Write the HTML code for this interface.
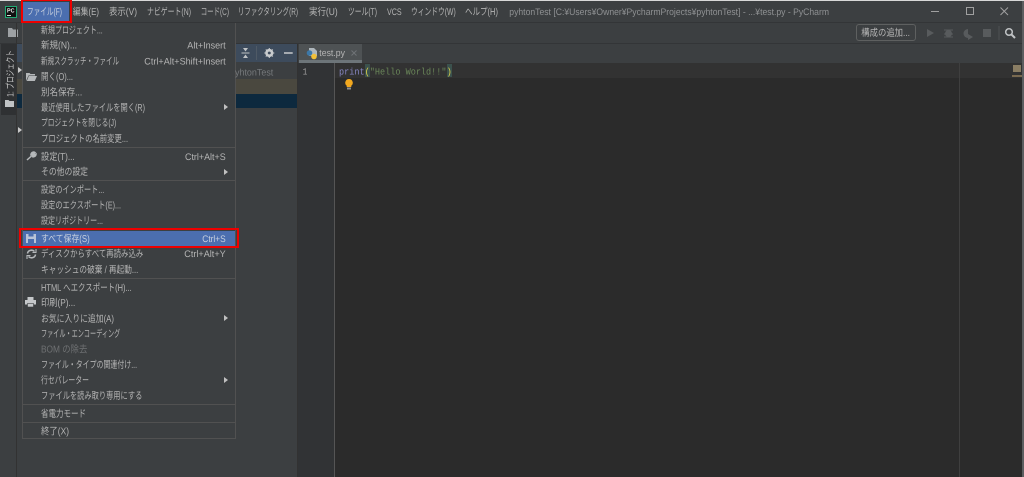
<!DOCTYPE html>
<html lang="ja"><head><meta charset="utf-8"><title>PyCharm</title>
<style>
html,body{margin:0;padding:0;background:#3c3f41}
#r{position:relative;width:1024px;height:477px;overflow:hidden;background:#3c3f41}
#r div,#r svg{position:absolute}
#tx{left:0;top:0;filter:blur(.35px)}
#tx text{font-family:"Liberation Sans","Noto Sans CJK JP",sans-serif;font-size:10px;fill:#b4b4b4;white-space:pre;text-rendering:geometricPrecision}
#tx .e{font-size:9.5px}
#tx .m{font-family:"Liberation Mono",monospace;font-size:9.5px}
.d{left:23px;width:212px;height:1px;background:#515151}
.ar{left:224px;width:0;height:0;border-left:4px solid #c0c0c0;border-top:3px solid transparent;border-bottom:3px solid transparent}
</style></head><body>
<div id="r">
<div style="left:0;top:0;width:1024px;height:1px;background:#d8d8d8"></div>
<div style="left:0;top:22px;width:1024px;height:1px;background:#333537"></div>
<div style="left:0;top:43px;width:1024px;height:1px;background:#333537"></div>
<div style="left:1022px;top:1px;width:2px;height:476px;background:#5c5e60"></div>

<!-- logo -->
<div style="left:5px;top:6px;width:12px;height:12px;background:#21a873"></div>
<div style="left:6px;top:7px;width:10px;height:10px;background:#111"></div>
<div style="left:7px;top:14.500px;width:4px;height:1px;background:#d8d8d8"></div>

<!-- menu bar highlight -->
<div style="left:23px;top:2px;width:46px;height:21px;background:#4b6eaf"></div>

<!-- window controls -->
<svg style="left:925px;top:3px" width="95" height="17" fill="none" stroke="#a0a0a0" stroke-width="1">
<path d="M6 8.500H14"/><rect x="41.500" y="4.500" width="7" height="7"/><path d="M75.500 4.500L83 12M83 4.500L75.500 12"/></svg>

<!-- toolbar -->
<svg style="left:7px;top:27px" width="12" height="11"><path d="M1 1h4l1 1.500h5V10H1z" fill="#9da1a4"/></svg>
<div style="left:856px;top:24px;width:58px;height:15px;border:1px solid #5e6060;border-radius:3px"></div>
<svg style="left:924px;top:25px" width="98" height="17">
<path d="M3 4L10 8L3 12z" fill="#585b5d"/>
<circle cx="24.500" cy="8.500" r="3.500" fill="#585b5d"/><path d="M20 5L29 5M20 9H29M20 12H29" stroke="#585b5d"/>
<path d="M44 4a4.500 4.500 0 1 0 0 9z" fill="#585b5d"/><path d="M44 9l5 3-5 3z" fill="#585b5d"/>
<rect x="59" y="4" width="8" height="8" fill="#585b5d"/>
<path d="M75 1V15" stroke="#4e5254"/>
<circle cx="85" cy="7" r="3.300" fill="none" stroke="#c0c3c5" stroke-width="1.500"/><path d="M87.500 9.500L91 13" stroke="#c0c3c5" stroke-width="2"/>
</svg>

<!-- left stripe -->
<div style="left:1px;top:44px;width:15px;height:71px;background:#2f3133"></div>
<svg style="left:5px;top:100px" width="9" height="7"><path d="M0 0h3.500l1 1H9V7H0z" fill="#c0c3c5"/></svg>
<div style="left:16px;top:23px;width:1px;height:454px;background:#323232"></div>

<!-- project panel -->
<div style="left:17px;top:44px;width:281px;height:18px;background:#3d4b5c"></div>
<div style="left:17px;top:79px;width:281px;height:15px;background:#4a483f"></div>
<div style="left:17px;top:94px;width:281px;height:14px;background:#0d293e"></div>
<svg style="left:18px;top:66px" width="5" height="70"><path d="M0 1L4 4L0 7z" fill="#c8c8c8"/><path d="M0 61L4 64L0 67z" fill="#c8c8c8"/></svg>
<svg style="left:236px;top:45px" width="60" height="16">
<path d="M5.500 8H13.500" stroke="#c0c3c5"/><path d="M7 3H12L9.500 6.500zM7 13H12L9.500 9.500z" fill="#c0c3c5"/>
<path d="M20.500 1V15" stroke="#4f5a66"/>
<circle cx="33.300" cy="8" r="2.900" fill="none" stroke="#c8cbcd" stroke-width="2.400"/>
<path d="M33.300 3V13M28.300 8H38.300M29.800 4.500L36.800 11.500M36.800 4.500L29.800 11.500" stroke="#c8cbcd" stroke-width="1.100"/>
<circle cx="33.300" cy="8" r="1.400" fill="#3d4b5c"/>
<path d="M48 8H56.700" stroke="#c8cbcd" stroke-width="1.500"/></svg>
<div style="left:297px;top:44px;width:1px;height:433px;background:#323232"></div>

<!-- tabs -->
<div style="left:298px;top:44px;width:724px;height:19px;background:#3c3f41"></div>
<div style="left:299px;top:44px;width:63px;height:16px;background:#4e5254"></div>
<div style="left:299px;top:60px;width:63px;height:3px;background:#6d7579"></div>
<svg style="left:306px;top:47px" width="12" height="13"><path d="M3 1h5l3 3v5H3z" fill="#aeb6bc"/><circle cx="3.500" cy="6" r="2.800" fill="#3c78a8"/><circle cx="8" cy="9.500" r="2.800" fill="#f2c037"/></svg>
<svg style="left:351px;top:50px" width="6" height="6"><path d="M0.500 0.500L5.500 5.500M5.500 0.500L0.500 5.500" stroke="#6f7376"/></svg>

<!-- gutter + editor -->
<div style="left:298px;top:63px;width:36px;height:414px;background:#313335"></div>
<div style="left:334px;top:63px;width:1px;height:414px;background:#555"></div>
<div style="left:335px;top:63px;width:687px;height:414px;background:#2b2b2b"></div>
<div style="left:335px;top:63px;width:687px;height:15px;background:#323232"></div>
<div style="left:959px;top:63px;width:1px;height:414px;background:#3f3f3f"></div>
<div style="left:1013px;top:65px;width:8px;height:7px;background:#8a7d63"></div>
<div style="left:1012px;top:75px;width:10px;height:2px;background:#7a6a50"></div>
<div style="left:365px;top:64px;width:5px;height:13px;background:#3b514d"></div>
<div style="left:447px;top:64px;width:5px;height:13px;background:#3b514d"></div>
<svg style="left:345px;top:79px" width="8" height="11"><path d="M4 0a3.800 3.800 0 0 1 2.300 6.800V8H1.700V6.800A3.800 3.800 0 0 1 4 0z" fill="#f2a81f"/><rect x="2" y="8.500" width="4" height="2" fill="#8f8f8f"/></svg>

<!-- menu -->
<div style="left:22px;top:23px;width:212px;height:415px;background:#3c3f41;border:1px solid #515151;border-top:0"></div>
<div class="d" style="top:147px"></div><div class="d" style="top:180px"></div><div class="d" style="top:229px"></div><div class="d" style="top:278px"></div><div class="d" style="top:404px"></div><div class="d" style="top:422px"></div>
<div style="left:23px;top:231px;width:212px;height:16px;background:#4b6eaf"></div>
<div class="ar" style="top:104px"></div><div class="ar" style="top:169px"></div><div class="ar" style="top:315px"></div><div class="ar" style="top:377px"></div>

<svg style="left:26px;top:73px" width="11" height="8"><path d="M0 0h3.500l1 1H9v1.500H2.500L0 8zM2.800 3H11L8.800 8H.8z" fill="#b5b8ba"/></svg>
<svg style="left:26px;top:151px" width="11" height="10"><path d="M1 9L5.500 5M5 4.500a2.700 2.700 0 0 1 4-3L7.500 3 8.300 4 10 3a2.700 2.700 0 0 1-4 2.500" fill="#b5b8ba" stroke="#b5b8ba" stroke-width="1.500"/></svg>
<svg style="left:26px;top:234px" width="10" height="9"><rect width="10" height="9" fill="#b9c3d6"/><rect x="2.500" y="0" width="5" height="2.500" fill="#4b6eaf"/><rect x="2" y="5" width="6" height="4" fill="#4b6eaf"/></svg>
<svg style="left:26px;top:249px" width="11" height="10" fill="none" stroke="#b5b8ba" stroke-width="1.500"><path d="M1.500 4.500a4 3.700 0 0 1 7-2M9.500 5.500a4 3.700 0 0 1-7 2"/><path d="M6.500 3.500H10V0M4.500 6.500H1V10" stroke-width="1.100"/></svg>
<svg style="left:25px;top:297px" width="11" height="10"><rect x="2.500" y="0" width="6" height="3" fill="#c4c7c9"/><rect x="0" y="3" width="11" height="4.500" fill="#c4c7c9"/><rect x="2.500" y="6.500" width="6" height="3.500" fill="#c4c7c9" stroke="#3c3f41" stroke-width=".6"/></svg>

<!-- all text -->
<svg id="tx" width="1024" height="477">
<g>
<text x="7" y="12.500" textLength="7.500" lengthAdjust="spacingAndGlyphs" style="font-size:6px;font-weight:bold;fill:#f0f0f0">PC</text>
<text x="27" y="15" textLength="35" lengthAdjust="spacingAndGlyphs" style="fill:#c8d0de">ファイル(F)</text>
<text x="72.700" y="15" textLength="26.300" lengthAdjust="spacingAndGlyphs">編集(E)</text>
<text x="109" y="15" textLength="28" lengthAdjust="spacingAndGlyphs">表示(V)</text>
<text x="147" y="15" textLength="44" lengthAdjust="spacingAndGlyphs">ナビゲート(N)</text>
<text x="200.700" y="15" textLength="28.300" lengthAdjust="spacingAndGlyphs">コード(C)</text>
<text x="238" y="15" textLength="60" lengthAdjust="spacingAndGlyphs">リファクタリング(R)</text>
<text x="309" y="15" textLength="28.700" lengthAdjust="spacingAndGlyphs">実行(U)</text>
<text x="348" y="15" textLength="29" lengthAdjust="spacingAndGlyphs">ツール(T)</text>
<text class="e" x="387" y="15" textLength="14.700" lengthAdjust="spacingAndGlyphs">VCS</text>
<text x="411" y="15" textLength="44.700" lengthAdjust="spacingAndGlyphs">ウィンドウ(W)</text>
<text x="465" y="15" textLength="33" lengthAdjust="spacingAndGlyphs">ヘルプ(H)</text>
<text class="e" x="509.300" y="15" textLength="319.700" lengthAdjust="spacingAndGlyphs" style="fill:#8f9193">pyhtonTest [C:¥Users¥Owner¥PycharmProjects¥pyhtonTest] - ...¥test.py - PyCharm</text>

<text x="861.300" y="36" textLength="48.700" lengthAdjust="spacingAndGlyphs">構成の追加...</text>
<text x="0" y="0" transform="translate(13.500 96.700) rotate(-90)" textLength="46.500" lengthAdjust="spacingAndGlyphs" style="font-size:9.500px;fill:#c4c4c4">1: プロジェクト</text>
<text class="e" x="235" y="75.500" textLength="38.300" lengthAdjust="spacingAndGlyphs" style="fill:#75787b">yhtonTest</text>
<text class="e" x="319.300" y="56" textLength="25.700" lengthAdjust="spacingAndGlyphs">test.py</text>

<text class="m" x="302.700" y="74.500" textLength="4.500" lengthAdjust="spacingAndGlyphs" style="fill:#a4a3a3">1</text>
<text class="m" x="339" y="74.500" textLength="25.600" lengthAdjust="spacingAndGlyphs" style="fill:#8888c6">print</text>
<text class="m" x="364.700" y="74.500" textLength="5" lengthAdjust="spacingAndGlyphs" style="fill:#e6d94a">(</text>
<text class="m" x="369.800" y="74.500" textLength="76.700" lengthAdjust="spacingAndGlyphs" style="fill:#6a8759">"Hello World!!"</text>
<text class="m" x="446.700" y="74.500" textLength="5" lengthAdjust="spacingAndGlyphs" style="fill:#e6d94a">)</text>

<text x="41" y="33.500" textLength="61.700" lengthAdjust="spacingAndGlyphs">新規プロジェクト...</text>
<text x="41" y="48.500" textLength="36" lengthAdjust="spacingAndGlyphs">新規(N)...</text>
<text class="e" x="187.300" y="48.500" textLength="38.400" lengthAdjust="spacingAndGlyphs">Alt+Insert</text>
<text x="41" y="64.500" textLength="78" lengthAdjust="spacingAndGlyphs">新規スクラッチ・ファイル</text>
<text class="e" x="144.300" y="64.500" textLength="81.400" lengthAdjust="spacingAndGlyphs">Ctrl+Alt+Shift+Insert</text>
<text x="41" y="80.200" textLength="32" lengthAdjust="spacingAndGlyphs">開く(O)...</text>
<text x="41" y="95.500" textLength="41.300" lengthAdjust="spacingAndGlyphs">別名保存...</text>
<text x="41" y="110.800" textLength="104" lengthAdjust="spacingAndGlyphs">最近使用したファイルを開く(R)</text>
<text x="41" y="126.200" textLength="75.300" lengthAdjust="spacingAndGlyphs">プロジェクトを閉じる(J)</text>
<text x="41" y="141.800" textLength="87" lengthAdjust="spacingAndGlyphs">プロジェクトの名前変更...</text>

<text x="41" y="160.200" textLength="33.700" lengthAdjust="spacingAndGlyphs">設定(T)...</text>
<text class="e" x="185" y="160.200" textLength="40.700" lengthAdjust="spacingAndGlyphs">Ctrl+Alt+S</text>
<text x="41" y="175.200" textLength="47" lengthAdjust="spacingAndGlyphs">その他の設定</text>

<text x="41" y="192.800" textLength="63.300" lengthAdjust="spacingAndGlyphs">設定のインポート...</text>
<text x="41" y="208.500" textLength="80" lengthAdjust="spacingAndGlyphs">設定のエクスポート(E)...</text>
<text x="41" y="223.800" textLength="62" lengthAdjust="spacingAndGlyphs">設定リポジトリー...</text>

<text x="41" y="241.800" textLength="48.700" lengthAdjust="spacingAndGlyphs" style="fill:#c8d0de">すべて保存(S)</text>
<text class="e" x="202.300" y="241.800" textLength="23.400" lengthAdjust="spacingAndGlyphs" style="fill:#c8d0de">Ctrl+S</text>
<text x="41" y="257.200" textLength="102.300" lengthAdjust="spacingAndGlyphs">ディスクからすべて再読み込み</text>
<text class="e" x="184.300" y="257.200" textLength="41.400" lengthAdjust="spacingAndGlyphs">Ctrl+Alt+Y</text>
<text x="41" y="272.800" textLength="97.300" lengthAdjust="spacingAndGlyphs">キャッシュの破棄 / 再起動...</text>

<text x="41" y="290.800" textLength="90.700" lengthAdjust="spacingAndGlyphs">HTML へエクスポート(H)...</text>
<text x="41" y="306.200" textLength="34.300" lengthAdjust="spacingAndGlyphs">印刷(P)...</text>
<text x="41" y="321.800" textLength="73" lengthAdjust="spacingAndGlyphs">お気に入りに追加(A)</text>
<text x="41" y="336.800" textLength="79.300" lengthAdjust="spacingAndGlyphs">ファイル・エンコーディング</text>
<text x="41" y="352.500" textLength="46.300" lengthAdjust="spacingAndGlyphs" style="fill:#6f7173">BOM の除去</text>
<text x="41" y="368.200" textLength="96" lengthAdjust="spacingAndGlyphs">ファイル・タイプの関連付け...</text>
<text x="41" y="383.500" textLength="48" lengthAdjust="spacingAndGlyphs">行セパレーター</text>
<text x="41" y="398.800" textLength="101.300" lengthAdjust="spacingAndGlyphs">ファイルを読み取り専用にする</text>
<text x="41" y="416.800" textLength="45" lengthAdjust="spacingAndGlyphs">省電力モード</text>
<text x="41" y="434.500" textLength="28" lengthAdjust="spacingAndGlyphs">終了(X)</text>
</g>
</svg>

<!-- red annotation boxes -->
<div style="left:21px;top:-1px;width:46.500px;height:20px;border:2.500px solid #ee0000"></div>
<div style="left:18.500px;top:228.300px;width:216.700px;height:16px;border:2.500px solid #ee0000"></div>
</div>
</body></html>
